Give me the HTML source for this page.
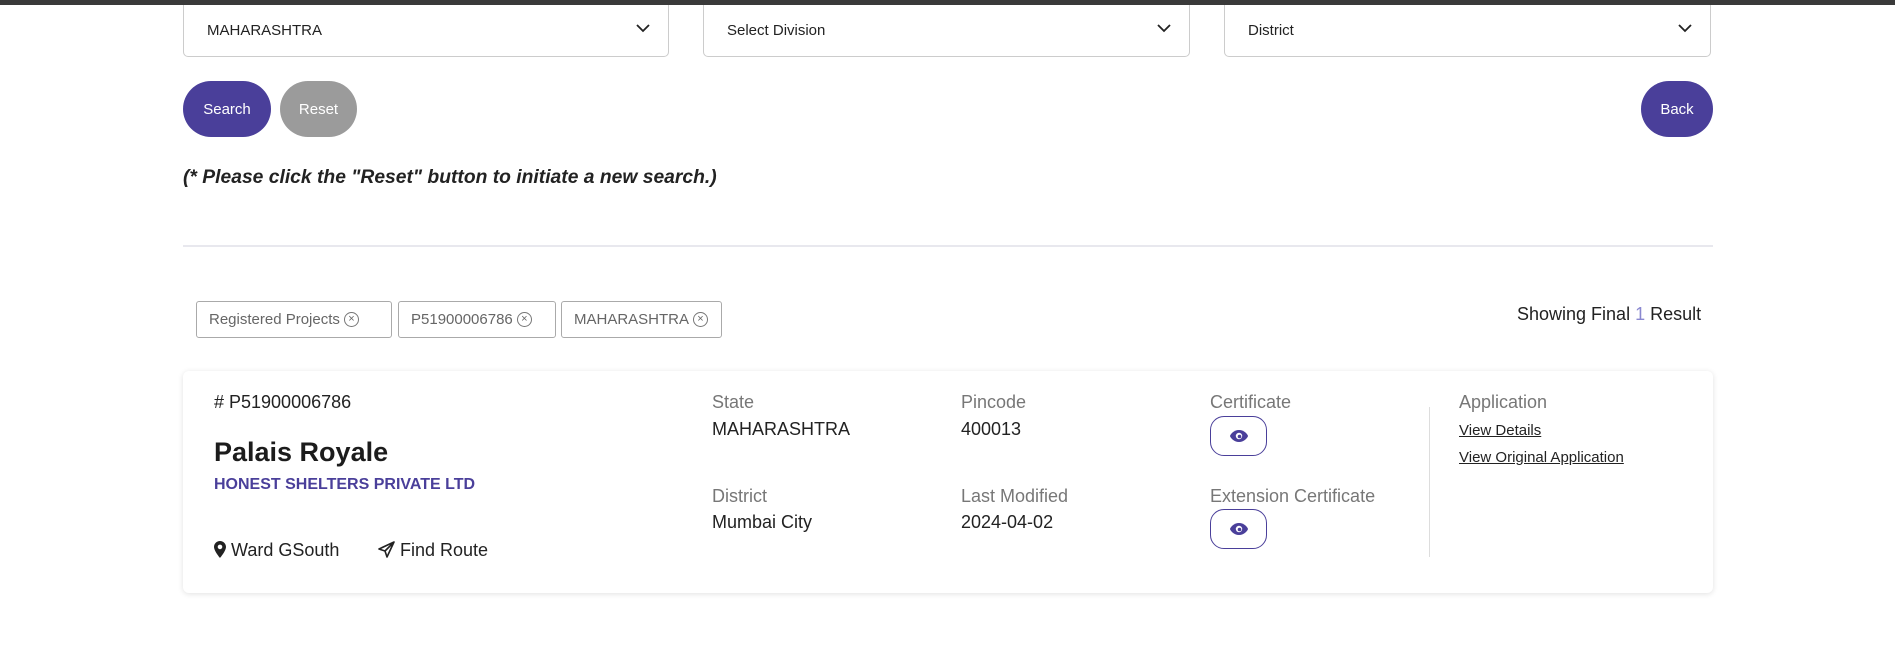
<!DOCTYPE html>
<html><head><meta charset="utf-8"><style>
*{box-sizing:border-box;margin:0;padding:0}
body{width:1895px;height:665px;background:#fff;font-family:"Liberation Sans",sans-serif;color:#222;position:relative;overflow:hidden}
.a{position:absolute;white-space:nowrap}
.bar{left:0;top:0;width:1895px;height:5px;background:#3a3a3a;z-index:2}
.sel{top:-4px;height:61px;border:1px solid #ccc;border-radius:5px;font-size:15px;color:#222;padding:25px 0 0 23px}
.sel svg{position:absolute;right:18px;top:27px}
.btn{border-radius:28px;color:#fff;font-size:15px;display:flex;align-items:center;justify-content:center}
.chip{top:301px;height:37px;border:1px solid #aaa;border-radius:3px;font-size:15px;color:#666;padding:0 0 0 12px;display:flex;align-items:center}
.chip span{display:inline-block;width:15px;height:15px;border:1px solid #777;border-radius:50%;font-size:11px;line-height:12px;text-align:center;margin-left:4px;color:#666}
.lbl{font-size:18px;color:#777}
.val{font-size:18px;color:#222}
.eye{width:57px;height:40px;border:1px solid #4a3f9a;border-radius:14px;display:flex;align-items:center;justify-content:center}
.lnk{font-size:15px;color:#222;text-decoration:underline}
</style></head><body>
<div class="a bar"></div>
<div class="a sel" style="left:183px;width:486px">MAHARASHTRA<svg width="14" height="9"><path d="M1 1l6 6 6-6" stroke="#222" stroke-width="1.8" fill="none"/></svg></div>
<div class="a sel" style="left:703px;width:487px">Select Division<svg width="14" height="9"><path d="M1 1l6 6 6-6" stroke="#222" stroke-width="1.8" fill="none"/></svg></div>
<div class="a sel" style="left:1224px;width:487px">District<svg width="14" height="9"><path d="M1 1l6 6 6-6" stroke="#222" stroke-width="1.8" fill="none"/></svg></div>
<div class="a btn" style="left:183px;top:81px;width:88px;height:56px;background:#4a3f9a">Search</div>
<div class="a btn" style="left:280px;top:81px;width:77px;height:56px;background:#9b9b9b">Reset</div>
<div class="a btn" style="left:1641px;top:81px;width:72px;height:56px;background:#4a3f9a">Back</div>
<div class="a" style="left:183px;top:167px;font-size:19.3px;font-weight:bold;font-style:italic;color:#222">(* Please click the "Reset" button to initiate a new search.)</div>
<div class="a" style="left:183px;top:245px;width:1530px;height:2px;background:#e8e8ee"></div>
<div class="a chip" style="left:196px;width:196px">Registered Projects<span>×</span></div>
<div class="a chip" style="left:398px;width:158px">P51900006786<span>×</span></div>
<div class="a chip" style="left:561px;width:161px">MAHARASHTRA<span>×</span></div>
<div class="a" style="left:1517px;top:304px;font-size:18px;color:#222">Showing Final <span style="color:#8a88d0">1</span> Result</div>
<div class="a" style="left:183px;top:371px;width:1530px;height:222px;border-radius:6px;box-shadow:0 1px 6px rgba(0,0,0,.12)"></div>
<div class="a val" style="left:214px;top:392px">#&nbsp;P51900006786</div>
<div class="a" style="left:214px;top:437px;font-size:27px;font-weight:bold;color:#1c1c1c">Palais Royale</div>
<div class="a" style="left:214px;top:476px;font-size:16px;font-weight:bold;color:#4a3f9a">HONEST SHELTERS PRIVATE LTD</div>
<div class="a val" style="left:214px;top:540px"><svg width="12" height="17" viewBox="0 0 12 17" style="vertical-align:-2px"><path d="M6 0C2.7 0 0 2.6 0 5.9 0 10 6 17 6 17s6-7 6-11.1C12 2.6 9.3 0 6 0zm0 8.2a2.3 2.3 0 110-4.6 2.3 2.3 0 010 4.6z" fill="#222"/></svg> Ward GSouth</div>
<div class="a val" style="left:378px;top:540px"><svg width="17" height="17" viewBox="0 0 17 17" style="vertical-align:-2px"><path d="M16 1L1 8l6 2 2 6zM7 10l9-9" stroke="#222" stroke-width="1.6" fill="none" stroke-linejoin="round"/></svg> Find Route</div>
<div class="a lbl" style="left:712px;top:392px">State</div>
<div class="a val" style="left:712px;top:419px">MAHARASHTRA</div>
<div class="a lbl" style="left:712px;top:486px">District</div>
<div class="a val" style="left:712px;top:512px">Mumbai City</div>
<div class="a lbl" style="left:961px;top:392px">Pincode</div>
<div class="a val" style="left:961px;top:419px">400013</div>
<div class="a lbl" style="left:961px;top:486px">Last Modified</div>
<div class="a val" style="left:961px;top:512px">2024-04-02</div>
<div class="a lbl" style="left:1210px;top:392px">Certificate</div>
<div class="a eye" style="left:1210px;top:416px"><svg width="20" height="14" viewBox="0 0 20 14"><path d="M10 1C5 1 1.5 5 1 7c.5 2 4 6 9 6s8.5-4 9-6c-.5-2-4-6-9-6z" fill="#4a3f9a"/><circle cx="10" cy="7" r="3.2" fill="#fff"/><circle cx="10.5" cy="7.5" r="1.8" fill="#4a3f9a"/></svg></div>
<div class="a lbl" style="left:1210px;top:486px">Extension Certificate</div>
<div class="a eye" style="left:1210px;top:509px"><svg width="20" height="14" viewBox="0 0 20 14"><path d="M10 1C5 1 1.5 5 1 7c.5 2 4 6 9 6s8.5-4 9-6c-.5-2-4-6-9-6z" fill="#4a3f9a"/><circle cx="10" cy="7" r="3.2" fill="#fff"/><circle cx="10.5" cy="7.5" r="1.8" fill="#4a3f9a"/></svg></div>
<div class="a" style="left:1429px;top:407px;width:1px;height:150px;background:#ddd"></div>
<div class="a lbl" style="left:1459px;top:392px">Application</div>
<div class="a lnk" style="left:1459px;top:422px">View Details</div>
<div class="a lnk" style="left:1459px;top:449px">View Original Application</div>
</body></html>
